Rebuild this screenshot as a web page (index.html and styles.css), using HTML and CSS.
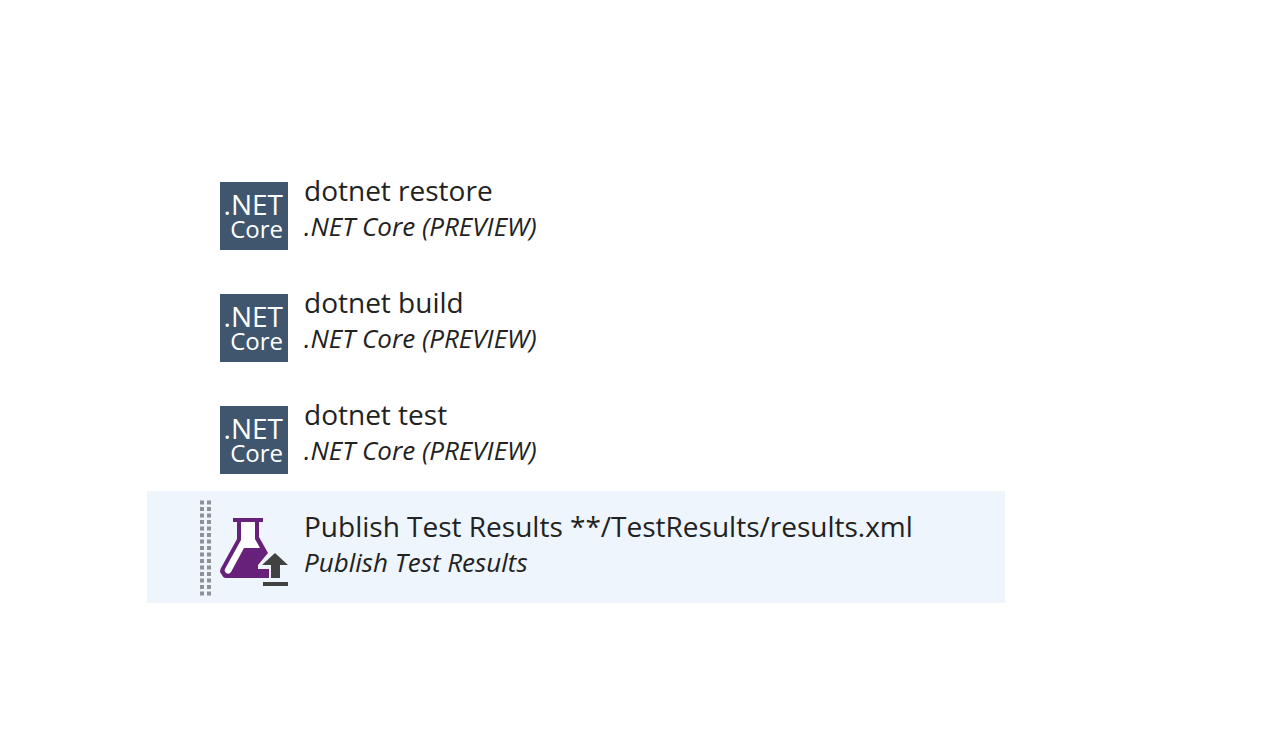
FILE: index.html
```html
<!DOCTYPE html>
<html lang="en">
<head>
    <meta charset="UTF-8">
    <meta name="viewport" content="width=device-width, initial-scale=1.0">
    <title>Build tasks</title>
    <link rel="stylesheet" href="styles.css">
</head>
<body>
    <ul class="task-list">
        <li class="task">
            <div class="core-icon"><span class="core-net">.NET</span><span class="core-name">Core</span></div>
            <div class="task-text">
                <div class="task-title">dotnet restore</div>
                <div class="task-type">.NET Core (PREVIEW)</div>
            </div>
        </li>
        <li class="task">
            <div class="core-icon"><span class="core-net">.NET</span><span class="core-name">Core</span></div>
            <div class="task-text">
                <div class="task-title">dotnet build</div>
                <div class="task-type">.NET Core (PREVIEW)</div>
            </div>
        </li>
        <li class="task">
            <div class="core-icon"><span class="core-net">.NET</span><span class="core-name">Core</span></div>
            <div class="task-text">
                <div class="task-title">dotnet test</div>
                <div class="task-type">.NET Core (PREVIEW)</div>
            </div>
        </li>
        <!-- Selected task, with its drag handle -->
        <li class="task selected">
            <svg class="drag-handle" viewBox="0 0 11 96" aria-hidden="true">
                <path d="M2 0.5V96M9 0.5V96" stroke="#8e9296" stroke-width="4" stroke-dasharray="4 2.5"/>
            </svg>
            <svg class="test-icon" viewBox="0 0 68 68" aria-hidden="true">
                <path d="M17 2H38V22L42 32L12 57H4L3 51L18 22Z" fill="#fff"/>
                <path d="M13 0H43V4H39V19L48 35L38 47V51H49V60H6Q3 60 2 57L0 54Q0 52 1 50L17 21V4H13ZM21 4V22L5 51Q4 53 6 55Q9 57 11 54L24 30H40L35 21V4Z" fill="#68217a" fill-rule="evenodd"/>
                <path d="M55 35L68 47H60V60H51V47H42ZM43 64H68V68H43Z" fill="#424242"/>
            </svg>
            <div class="task-text">
                <div class="task-title">Publish Test Results **/TestResults/results.xml</div>
                <div class="task-type">Publish Test Results</div>
            </div>
        </li>
    </ul>
</body>
</html>
```
FILE: styles.css
```css
body {
    margin: 0;
    background-color: #fff;
    color: #222;
    font-family: "Open Sans", sans-serif;
}

/* Task list */
.task-list {
    list-style: none;
    width: 67%;
    margin: 155px 0 0 147px;
    padding: 0;
}

.task {
    display: flex;
    align-items: flex-start;
    gap: 16px;
    padding: 17px 16px 18px 73px;
}

.task.selected {
    padding-left: 53px;
    background-color: #eef5fc;
}

/* Icons */
.drag-handle {
    width: 11px;
    height: 96px;
    margin: -8px -7px -20px 0;
}

.core-icon,
.test-icon {
    flex: none;
    width: 68px;
    height: 68px;
    margin-top: 10px;
}

.test-icon {
    margin-bottom: -1px;
}

.core-icon {
    display: flex;
    flex-direction: column;
    align-items: flex-end;
    box-sizing: border-box;
    padding: 8px 5px 0 0;
    margin-bottom: -1px;
    background-color: #40566f;
    color: #fff;
}

.core-net {
    font-size: 28px;
    line-height: 28px;
}

.core-name {
    font-size: 24px;
    line-height: 21px;
}

/* Task text */
.task-title {
    font-size: 28px;
    line-height: 36px;
}

.task-type {
    font-size: 26px;
    font-style: italic;
    line-height: 36px;
}
```
